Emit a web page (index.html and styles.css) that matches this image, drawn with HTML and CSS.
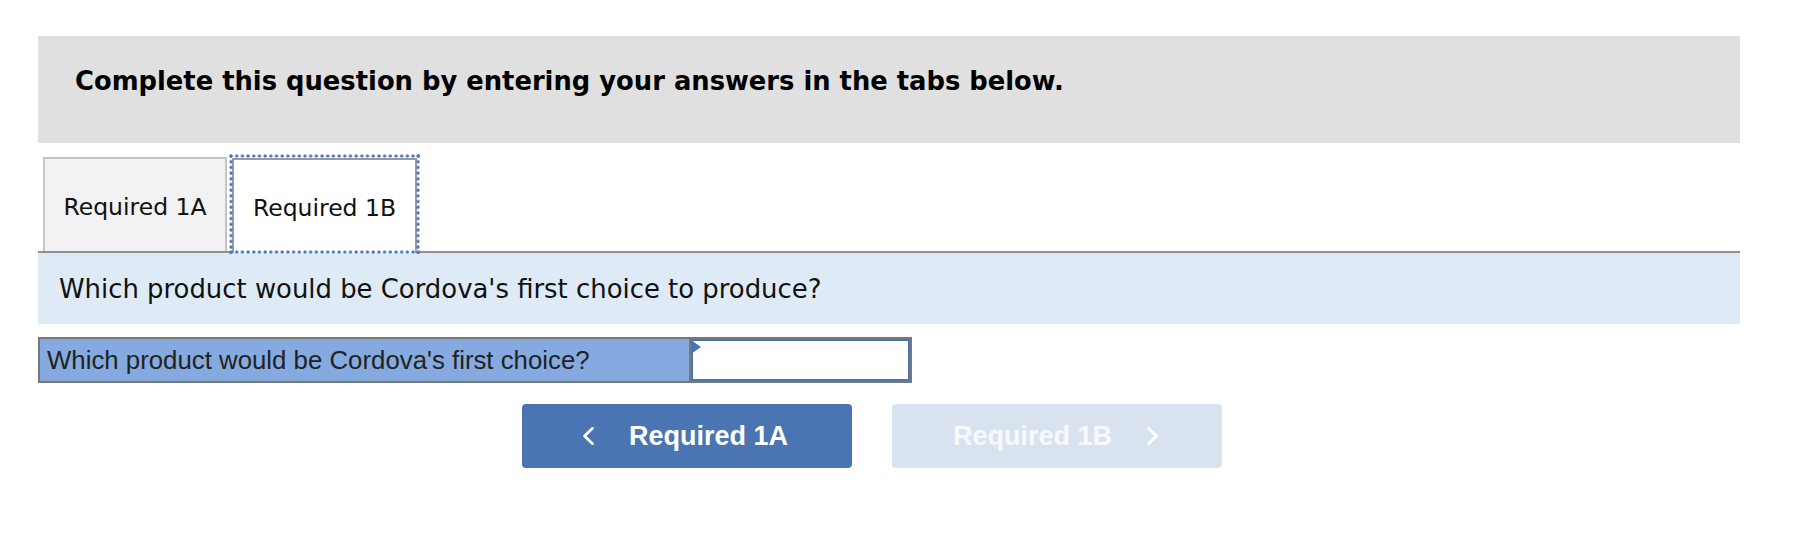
FILE: index.html
```html
<!DOCTYPE html>
<html lang="en">
<head>
<meta charset="utf-8">
<title>Required 1B</title>
<link rel="stylesheet" href="styles.css">
</head>
<body>
<div class="page">
  <div class="banner">
    <h2 class="banner-title">Complete this question by entering your answers in the tabs below.</h2>
  </div>

  <div class="tabs">
    <div class="tab">Required 1A</div>
    <div class="tab tab-active">Required 1B</div>
  </div>

  <div class="prompt">Which product would be Cordova's first choice to produce?</div>

  <div class="answer-row">
    <div class="answer-label">Which product would be Cordova's first choice?</div>
    <div class="answer-input"><span class="flag"></span></div>
  </div>

  <div class="nav">
    <button class="nav-btn nav-prev" type="button">
      <svg class="chev" width="12" height="18" viewBox="0 0 12 18" aria-hidden="true"><polyline points="10.5,1.2 2.5,9 10.5,16.8" fill="none" stroke="#ffffff" stroke-width="2.6" stroke-linecap="round" stroke-linejoin="round"/></svg>
      <span>Required 1A</span>
    </button>
    <button class="nav-btn nav-next" type="button">
      <span>Required 1B</span>
      <svg class="chev" width="12" height="18" viewBox="0 0 12 18" aria-hidden="true"><polyline points="1.5,1.2 9.5,9 1.5,16.8" fill="none" stroke="#ffffff" stroke-width="2.6" stroke-linecap="round" stroke-linejoin="round"/></svg>
    </button>
  </div>
</div>
</body>
</html>
```

FILE: styles.css
```css
html, body {
  margin: 0;
  padding: 0;
  background: #ffffff;
}

.page {
  width: 1702px;
  padding: 36px 0 0 38px;
  font-family: "DejaVu Sans", Verdana, sans-serif;
  color: #000000;
}

.banner {
  box-sizing: border-box;
  height: 107px;
  background: #e0e0e0;
  padding: 33px 0 0 37px;
}

.banner-title {
  margin: 0;
  font-size: 25.8px;
  line-height: 25.8px;
  font-weight: bold;
  color: #000000;
  white-space: nowrap;
}

.tabs {
  display: flex;
  align-items: flex-end;
  margin-top: 14px;
  padding-left: 5px;
  border-bottom: 2px solid #909090;
}

.tab {
  box-sizing: border-box;
  height: 94px;
  display: flex;
  align-items: center;
  justify-content: center;
  padding-top: 3px;
  font-size: 23.5px;
  color: #111111;
  background: #f2f2f2;
  border: 2px solid #c4c4c4;
  border-bottom: none;
  width: 184px;
}

.tab-active {
  position: relative;
  width: 185px;
  height: 95px;
  margin-left: 5px;
  margin-bottom: -2px;
  background: #ffffff;
  border-color: #9a9a9a;
}

.tab-active::after {
  content: "";
  position: absolute;
  left: -5px;
  right: -5px;
  top: -6px;
  bottom: -1px;
  pointer-events: none;
  background:
    radial-gradient(circle at 2px 2px, #4878c4 1.3px, rgba(72,120,196,0) 1.9px) left top / 5.7px 4px repeat-x,
    radial-gradient(circle at 2px 2px, #4878c4 1.3px, rgba(72,120,196,0) 1.9px) left bottom / 5.7px 4px repeat-x,
    radial-gradient(circle at 2px 2px, #4878c4 1.3px, rgba(72,120,196,0) 1.9px) left top / 4px 5.7px repeat-y,
    radial-gradient(circle at 2px 2px, #4878c4 1.3px, rgba(72,120,196,0) 1.9px) right top / 4px 5.7px repeat-y;
}

.prompt {
  box-sizing: border-box;
  height: 71px;
  display: flex;
  align-items: center;
  padding-left: 21px;
  background: #deebf7;
  font-size: 25.9px;
  color: #111111;
  white-space: nowrap;
}

.answer-row {
  display: flex;
  width: 874px;
  box-sizing: border-box;
  height: 46px;
  margin-top: 13px;
  border: 2px solid #787878;
}

.answer-label {
  box-sizing: border-box;
  width: 651px;
  display: flex;
  align-items: center;
  padding: 1px 0 0 7px;
  background: #84aae0;
  border-right: 2px solid #787878;
  font-family: "Liberation Sans", Arial, sans-serif;
  font-size: 25.8px;
  color: #222222;
  white-space: nowrap;
}

.answer-input {
  position: relative;
  flex: 1;
  background: #ffffff;
  border: 2px solid #4a74b5;
}

.flag {
  position: absolute;
  left: -2px;
  top: -1px;
  width: 0;
  height: 0;
  border-top: 7px solid transparent;
  border-bottom: 7px solid transparent;
  border-left: 10px solid #4a74b5;
}

.nav {
  display: flex;
  gap: 40px;
  margin-top: 21px;
  padding-left: 484px;
}

.nav-btn {
  box-sizing: border-box;
  width: 330px;
  height: 64px;
  display: flex;
  align-items: center;
  justify-content: center;
  gap: 35px;
  border: none;
  border-radius: 4px;
  padding: 0;
  font-family: "Liberation Sans", Arial, sans-serif;
  font-weight: bold;
  font-size: 27px;
  color: #ffffff;
  cursor: pointer;
}

.nav-prev {
  background: #4a74b2;
  padding-right: 4px;
}

.nav-next {
  background: #d9e3f0;
  color: #f7f9fc;
  padding-right: 2px;
}

.chev {
  display: block;
  flex: none;
}
```
